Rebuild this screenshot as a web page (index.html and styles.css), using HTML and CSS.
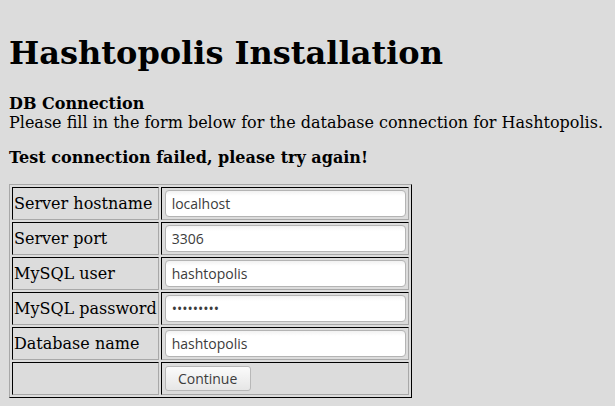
FILE: index.html
```html
<!DOCTYPE html>
<html>
<head>
<meta charset="utf-8">
<title>Hashtopolis Installation</title>
<link rel="stylesheet" href="styles.css">
</head>
<body>
<h1 class="title">Hashtopolis Installation</h1>
<div class="intro"><b>DB Connection</b><br>Please fill in the form below for the database connection for Hashtopolis.</div>
<p class="error"><b>Test connection failed, please try again!</b></p>
<form class="db-form" action="#" method="post">
<table class="form-table">
<tr><td class="label">Server hostname</td><td class="field"><input class="text-input" type="text" value="localhost"></td></tr>
<tr><td class="label">Server port</td><td class="field"><input class="text-input" type="text" value="3306"></td></tr>
<tr><td class="label">MySQL user</td><td class="field"><input class="text-input" type="text" value="hashtopolis"></td></tr>
<tr><td class="label">MySQL password</td><td class="field"><input class="text-input" type="password" value="hashtopol"></td></tr>
<tr><td class="label">Database name</td><td class="field"><input class="text-input" type="text" value="hashtopolis"></td></tr>
<tr><td class="label"></td><td class="field"><button class="btn" type="submit">Continue</button></td></tr>
</table>
</form>
</body>
</html>
```

FILE: styles.css
```css
html {
  background: #dcdcdc;
}
body {
  margin: 0;
  padding: 8px 8px 8px 9px;
  font-family: "DejaVu Serif", serif;
  font-size: 16px;
  color: #000;
  background: #dcdcdc;
}
.title {
  font-size: 32px;
  font-weight: bold;
  line-height: 37px;
  margin: 27px 0 22px 0;
}
.intro {
  line-height: 19px;
}
.error {
  margin: 16px 0 17px 0;
  line-height: 19px;
}
.db-form {
  margin: 0;
}
.form-table {
  border-collapse: separate;
  border-spacing: 2px;
  border-style: solid;
  border-width: 1px;
  border-color: #a8a8a8 #000 #000 #a8a8a8;
}
.form-table td {
  padding: 1px;
  height: 29px;
  border-style: solid;
  border-width: 1px;
  border-color: #000 #a8a8a8 #a8a8a8 #000;
  vertical-align: middle;
}
.label {
  white-space: nowrap;
  line-height: 19px;
}
.text-input {
  display: block;
  box-sizing: border-box;
  width: 241px;
  height: 27px;
  margin: 1px 1px 1px 2px;
  padding: 0 6px;
  border: 1px solid #b4b4b4;
  border-radius: 4px;
  background: linear-gradient(#f2f2f2, #ffffff 5px);
  font-family: "Open Sans", "DejaVu Sans", sans-serif;
  font-size: 14px;
  color: #3c3c3c;
}
.btn {
  display: block;
  box-sizing: border-box;
  width: 86px;
  height: 25px;
  margin: 2px 0 2px 2px;
  padding: 0;
  border: 1px solid #b8b8b8;
  border-radius: 3px;
  background: linear-gradient(#fbfbfb, #e6e6e6);
  font-family: "Open Sans", "DejaVu Sans", sans-serif;
  font-size: 14px;
  color: #3c3c3c;
}
```
